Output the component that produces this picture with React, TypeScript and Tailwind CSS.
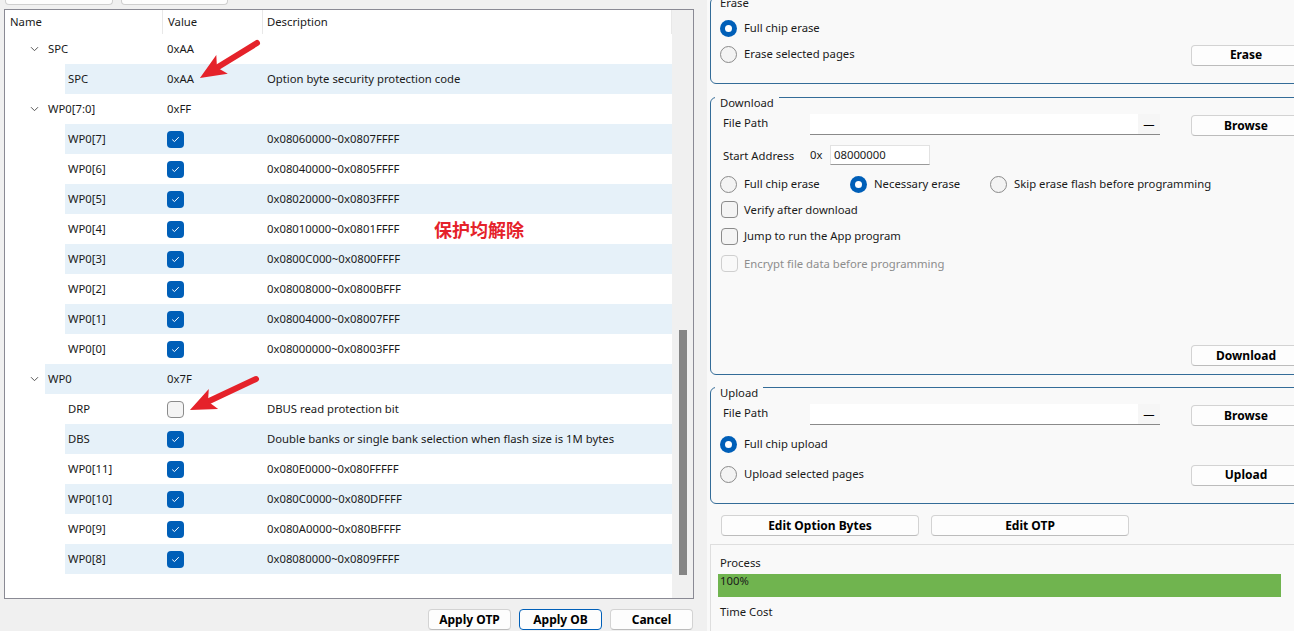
import React from "react";

type Row = {
  level: 0 | 1;
  name: string;
  value?: string;
  check?: boolean;
  desc?: string;
};

const rows: Row[] = [
  { level: 0, name: "SPC", value: "0xAA" },
  { level: 1, name: "SPC", value: "0xAA", desc: "Option byte security protection code" },
  { level: 0, name: "WP0[7:0]", value: "0xFF" },
  { level: 1, name: "WP0[7]", check: true, desc: "0x08060000~0x0807FFFF" },
  { level: 1, name: "WP0[6]", check: true, desc: "0x08040000~0x0805FFFF" },
  { level: 1, name: "WP0[5]", check: true, desc: "0x08020000~0x0803FFFF" },
  { level: 1, name: "WP0[4]", check: true, desc: "0x08010000~0x0801FFFF" },
  { level: 1, name: "WP0[3]", check: true, desc: "0x0800C000~0x0800FFFF" },
  { level: 1, name: "WP0[2]", check: true, desc: "0x08008000~0x0800BFFF" },
  { level: 1, name: "WP0[1]", check: true, desc: "0x08004000~0x08007FFF" },
  { level: 1, name: "WP0[0]", check: true, desc: "0x08000000~0x08003FFF" },
  { level: 0, name: "WP0", value: "0x7F" },
  { level: 1, name: "DRP", check: false, desc: "DBUS read protection bit" },
  { level: 1, name: "DBS", check: true, desc: "Double banks or single bank selection when flash size is 1M bytes" },
  { level: 1, name: "WP0[11]", check: true, desc: "0x080E0000~0x080FFFFF" },
  { level: 1, name: "WP0[10]", check: true, desc: "0x080C0000~0x080DFFFF" },
  { level: 1, name: "WP0[9]", check: true, desc: "0x080A0000~0x080BFFFF" },
  { level: 1, name: "WP0[8]", check: true, desc: "0x08080000~0x0809FFFF" },
];

function TableCheck({ on }: { on: boolean }) {
  if (!on) {
    return <div className="w-[17px] h-[17px] rounded-[4px] border border-[#8b8b8b] bg-[#f4f4f4]" />;
  }
  return (
    <div className="w-[17px] h-[17px] rounded-[4px] bg-[#005fb8] flex items-center justify-center">
      <svg width="9" height="7" viewBox="0 0 9 7" fill="none">
        <path d="M1.5 3.8l2 1.8 4-4.2" stroke="white" strokeWidth="1" strokeLinecap="round" strokeLinejoin="round" />
      </svg>
    </div>
  );
}

function Radio({ on }: { on: boolean }) {
  if (on) {
    return (
      <div className="w-[17px] h-[17px] rounded-full bg-[#005fb8] flex items-center justify-center shrink-0">
        <div className="w-[7px] h-[7px] rounded-full bg-white" />
      </div>
    );
  }
  return <div className="w-[17px] h-[17px] rounded-full border border-[#8b8b8b] bg-[#f3f3f3] shrink-0" />;
}

function Check({ disabled }: { disabled?: boolean }) {
  return (
    <div
      className={`w-[17px] h-[17px] rounded-[4px] border shrink-0 ${
        disabled ? "border-[#cfcfcf] bg-[#f9f9f9]" : "border-[#8b8b8b] bg-[#f4f4f4]"
      }`}
    />
  );
}

function Button({ label, w, primary }: { label: string; w: string; primary?: boolean }) {
  return (
    <div
      className={`${w} h-[21px] shrink-0 rounded-[4px] border bg-[#fdfdfd] flex items-center justify-center font-bold text-[12px] text-black ${
        primary ? "border-[#005fb8]" : "border-[#d3d3d3] border-b-[#bcbcbc]"
      }`}
    >
      {label}
    </div>
  );
}

function PathInput() {
  return (
    <div className="w-[350px] h-[21px] bg-white border-b border-[#8a8a8a] flex">
      <div className="flex-1" />
      <div className="w-[22px] bg-[#f6f6f6] flex items-center justify-center text-black">—</div>
    </div>
  );
}

function GroupBox({ title, className, children }: { title: string; className: string; children: React.ReactNode }) {
  return (
    <div className={`relative w-[600px] border border-[#346c98] rounded-[6px] pl-[9px] pr-[8px] flex flex-col ${className}`}>
      <span className="absolute -top-[2px] left-[4px] bg-[#f9f9f9] px-[5px] leading-[14px]">{title}</span>
      {children}
    </div>
  );
}

function Arrow({ x, y, angle, len }: { x: number; y: number; angle: number; len: number }) {
  return (
    <g transform={`translate(${x} ${y}) rotate(${angle})`}>
      <line x1="0" y1="0" x2={len - 16} y2="0" stroke="#e5222a" strokeWidth="6" strokeLinecap="round" />
      <polygon points={`${len},0 ${len - 26},-11 ${len - 20},0 ${len - 26},11`} fill="#e5222a" />
    </g>
  );
}

export default function App() {
  return (
    <div className="w-[1294px] h-[631px] overflow-hidden flex font-['Noto_Sans',sans-serif] text-[11.3px] leading-[14px] text-[#1a1a1a]">
      {/* option bytes dialog */}
      <div className="relative w-[707px] shrink-0 bg-[#f0f0f0] flex flex-col">
        <div className="h-[9px] flex gap-[8px] pl-[5px]">
          <div className="w-[108px] h-[5px] border-x border-b border-[#cfcfcf] rounded-b-[4px] bg-[#fdfdfd]" />
          <div className="w-[107px] h-[5px] border-x border-b border-[#cfcfcf] rounded-b-[4px] bg-[#fdfdfd]" />
        </div>

        <div className="ml-[4px] w-[690px] h-[590px] border border-[#8a8a94] bg-white flex">
          <div className="w-[667px] flex flex-col">
            <div className="h-[24px] flex shrink-0">
              <div className="w-[158px] pl-[5px] pt-[5px] border-r border-[#e8e8e8]">Name</div>
              <div className="w-[100px] pl-[5px] pt-[5px] border-r border-[#e8e8e8]">Value</div>
              <div className="flex-1 pl-[4px] pt-[5px] border-r border-[#e8e8e8]">Description</div>
            </div>
            {rows.map((r, i) => (
              <div key={i} className="h-[30px] flex shrink-0">
                {r.level === 0 ? (
                  <div className="w-[40px] flex items-center pl-[25px]">
                    <svg width="9" height="6" viewBox="0 0 9 6" fill="none">
                      <path d="M1 1.2l3.5 3.5L8 1.2" stroke="#555" strokeWidth="1" />
                    </svg>
                  </div>
                ) : (
                  <div className="w-[60px]" />
                )}
                <div className={`flex-1 flex items-center ${i % 2 === 1 ? "bg-[#e6f1f9]" : ""}`}>
                  <div className={`${r.level === 0 ? "w-[118px]" : "w-[98px]"} pl-[3px]`}>{r.name}</div>
                  <div className="w-[100px] pl-[4px]">
                    {r.check === undefined ? r.value : <TableCheck on={r.check} />}
                  </div>
                  <div className="flex-1 pl-[4px]">{r.desc}</div>
                </div>
              </div>
            ))}
          </div>
          <div className="flex-1 bg-[#f0f0f0] pl-[7px] pt-[320px]">
            <div className="w-[8px] h-[245px] bg-[#858585]" />
          </div>
        </div>

        <div className="mt-[10px] flex justify-end gap-[8px] pr-[14px]">
          <Button label="Apply OTP" w="w-[83px]" />
          <Button label="Apply OB" w="w-[83px]" primary />
          <Button label="Cancel" w="w-[83px]" />
        </div>

        <svg className="absolute left-0 top-0 pointer-events-none" width="707" height="631">
          <Arrow x={257} y={43} angle={148.45} len={67} />
          <Arrow x={256} y={379} angle={154.84} len={73} />
        </svg>
        <span className="absolute left-[434px] top-[218px] text-[18px] leading-[22px] font-bold text-[#e5222a] font-['Noto_Sans_CJK_SC',sans-serif]">
          保护均解除
        </span>
      </div>

      {/* programmer panel */}
      <div className="flex-1 bg-[#f9f9f9] pl-[3px] overflow-hidden flex flex-col">
        <GroupBox title="Erase" className="-mt-[3px] h-[87px] pt-[17px]">
          <div className="h-[26px] flex items-center gap-[7px]">
            <Radio on />
            <span>Full chip erase</span>
          </div>
          <div className="h-[26px] flex items-center gap-[7px]">
            <Radio on={false} />
            <span>Erase selected pages</span>
            <div className="ml-auto mt-[2px]">
              <Button label="Erase" w="w-[110px]" />
            </div>
          </div>
        </GroupBox>

        <GroupBox title="Download" className="mt-[13px] h-[278px] pt-[15px]">
          <div className="h-[22px] flex items-center pl-[3px]">
            <span className="w-[87px] -mt-[3px]">File Path</span>
            <PathInput />
            <div className="ml-auto mt-[3px]">
              <Button label="Browse" w="w-[110px]" />
            </div>
          </div>
          <div className="mt-[10px] h-[20px] flex items-center pl-[3px]">
            <span className="w-[87px] pt-[2px]">Start Address</span>
            <span className="w-[20px]">0x</span>
            <div className="w-[100px] h-[20px] bg-white border border-[#e2e2e2] border-b-[#9a9a9a] pl-[3px] flex items-center">
              08000000
            </div>
          </div>
          <div className="mt-[6px] h-[26px] flex items-center">
            <div className="w-[130px] flex items-center gap-[7px]">
              <Radio on={false} />
              <span>Full chip erase</span>
            </div>
            <div className="w-[140px] flex items-center gap-[7px]">
              <Radio on />
              <span>Necessary erase</span>
            </div>
            <div className="flex items-center gap-[7px]">
              <Radio on={false} />
              <span>Skip erase flash before programming</span>
            </div>
          </div>
          <div className="h-[25px] flex items-center gap-[6px] pl-[1px]">
            <Check />
            <span>Verify after download</span>
          </div>
          <div className="h-[28px] flex items-center gap-[6px] pl-[1px]">
            <Check />
            <span>Jump to run the App program</span>
          </div>
          <div className="h-[27px] flex items-center gap-[6px] pl-[1px] text-[#8d8d8d]">
            <Check disabled />
            <span>Encrypt file data before programming</span>
          </div>
          <div className="mt-auto mb-[8px] flex justify-end">
            <Button label="Download" w="w-[110px]" />
          </div>
        </GroupBox>

        <GroupBox title="Upload" className="mt-[12px] h-[117px] pt-[15px]">
          <div className="h-[22px] flex items-center pl-[3px]">
            <span className="w-[87px] -mt-[3px]">File Path</span>
            <PathInput />
            <div className="ml-auto mt-[3px]">
              <Button label="Browse" w="w-[110px]" />
            </div>
          </div>
          <div className="mt-[4px] h-[30px] flex items-center gap-[7px]">
            <Radio on />
            <span>Full chip upload</span>
          </div>
          <div className="h-[30px] flex items-center gap-[7px]">
            <Radio on={false} />
            <span>Upload selected pages</span>
            <div className="ml-auto mt-[2px]">
              <Button label="Upload" w="w-[110px]" />
            </div>
          </div>
        </GroupBox>

        <div className="mt-[11px] pl-[11px] flex gap-[12px]">
          <Button label="Edit Option Bytes" w="w-[198px]" />
          <Button label="Edit OTP" w="w-[198px]" />
        </div>

        <div className="mt-[8px] flex-1 border-t border-l border-[#dedede] pl-[7px] pt-[11px] flex flex-col">
          <span className="pl-[2px]">Process</span>
          <div className="mt-[4px] w-[563px] h-[23px] bg-[#70b44f] pl-[2px]">100%</div>
          <span className="mt-[8px] pl-[2px]">Time Cost</span>
        </div>
      </div>
    </div>
  );
}
